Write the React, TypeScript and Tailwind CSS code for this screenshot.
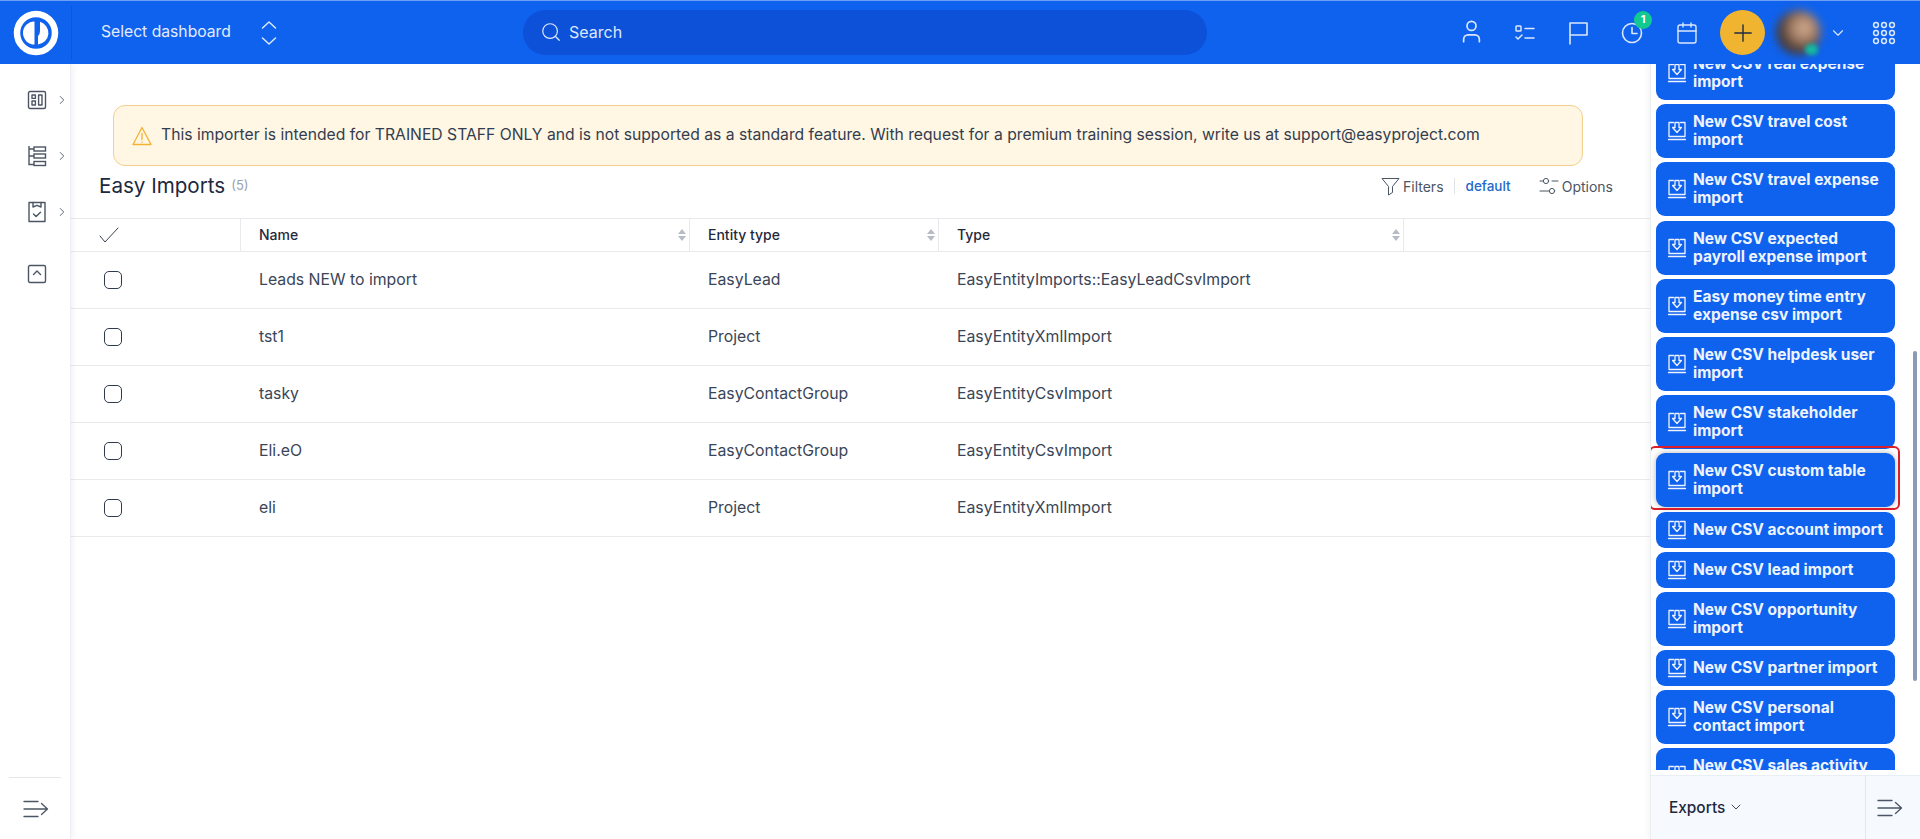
import { ReactNode } from 'react';
import { Calendar, ChevronDown, ChevronRight, Plus, Search, User } from 'lucide-react';

const imports = [
  { name: 'Leads NEW to import', entity: 'EasyLead', type: 'EasyEntityImports::EasyLeadCsvImport' },
  { name: 'tst1', entity: 'Project', type: 'EasyEntityXmlImport' },
  { name: 'tasky', entity: 'EasyContactGroup', type: 'EasyEntityCsvImport' },
  { name: 'Eli.eO', entity: 'EasyContactGroup', type: 'EasyEntityCsvImport' },
  { name: 'eli', entity: 'Project', type: 'EasyEntityXmlImport' },
];

const panelButtons = [
  { label: 'New CSV real expense import', tall: true },
  { label: 'New CSV travel cost import', tall: true },
  { label: 'New CSV travel expense import', tall: true },
  { label: 'New CSV expected payroll expense import', tall: true },
  { label: 'Easy money time entry expense csv import', tall: true },
  { label: 'New CSV helpdesk user import', tall: true },
  { label: 'New CSV stakeholder import', tall: true },
  { label: 'New CSV custom table import', tall: true, marked: true },
  { label: 'New CSV account import', tall: false },
  { label: 'New CSV lead import', tall: false },
  { label: 'New CSV opportunity import', tall: true },
  { label: 'New CSV partner import', tall: false },
  { label: 'New CSV personal contact import', tall: true },
  { label: 'New CSV sales activity import', tall: true },
];

function Logo() {
  return (
    <svg width="46" height="46" viewBox="0 0 46 46">
      <circle cx="23" cy="23" r="19" fill="none" stroke="#fff" strokeWidth="6.5" />
      <path d="M21.5 11.5 A11.5 11.5 0 0 0 21.5 34.5 Z" fill="#fff" />
      <path d="M27 9 L27 21 Q27 24 25 26 L25 34.5 A11.6 11.6 0 0 0 27 11.8" fill="#fff" />
    </svg>
  );
}

function UpDownIcon() {
  return (
    <svg width="20" height="26" viewBox="0 0 20 26" fill="none" stroke="#dce8fd" strokeWidth="1.5" strokeLinecap="round" strokeLinejoin="round">
      <path d="M3.5 8 10 2l6.5 6M3.5 18l6.5 6 6.5-6" />
    </svg>
  );
}

function TaskListIcon() {
  return (
    <svg width="24" height="24" viewBox="0 0 24 24" fill="none" stroke="currentColor" strokeWidth="1.5" strokeLinecap="round" strokeLinejoin="round">
      <rect x="3" y="5" width="5" height="5" rx="0.8" />
      <path d="M12 7.5h9M3 16l2 2 4-4M12 17h9" />
    </svg>
  );
}

function FlagIcon() {
  return (
    <svg width="24" height="26" viewBox="0 0 24 26" fill="none" stroke="currentColor" strokeWidth="1.6" strokeLinecap="round" strokeLinejoin="round">
      <path d="M4 24V3H21V15H4" />
    </svg>
  );
}

function ClockIcon() {
  return (
    <svg width="24" height="24" viewBox="0 0 24 24" fill="none" stroke="currentColor" strokeWidth="1.6" strokeLinecap="round" strokeLinejoin="round">
      <circle cx="12" cy="12" r="9.5" />
      <path d="M12 6.5V12.5H17" />
    </svg>
  );
}

function GridIcon() {
  const dots = [4, 12, 20];
  return (
    <svg width="24" height="24" viewBox="0 0 24 24" fill="none" stroke="currentColor" strokeWidth="1.5">
      {dots.map((y) => dots.map((x) => <circle key={`${x}-${y}`} cx={x} cy={y} r="2.4" />))}
    </svg>
  );
}

function DashIcon() {
  return (
    <svg width="20" height="20" viewBox="0 0 20 20" fill="none" stroke="#4b5563" strokeWidth="1.4" strokeLinejoin="round">
      <rect x="1.5" y="1.5" width="17" height="17" rx="1.5" />
      <rect x="5" y="5" width="3.4" height="3.4" />
      <rect x="5" y="11" width="3.4" height="4" />
      <rect x="11.6" y="5" width="3.4" height="10" />
    </svg>
  );
}

function TreeIcon() {
  return (
    <svg width="20" height="22" viewBox="0 0 20 22" fill="none" stroke="#4b5563" strokeWidth="1.4">
      <path d="M2 1v18.5h5M2 11h5M2 4h5" />
      <rect x="7" y="2" width="11.5" height="4" />
      <rect x="7" y="9" width="11.5" height="4" />
      <rect x="7" y="16.5" width="11.5" height="4" />
    </svg>
  );
}

function ClipboardIcon() {
  return (
    <svg width="20" height="22" viewBox="0 0 20 22" fill="none" stroke="#4b5563" strokeWidth="1.4" strokeLinejoin="round" strokeLinecap="round">
      <path d="M6 1.5H2V20.5H18V1.5H14" />
      <path d="M6 1.5H14V6L10 4.4 6 6Z" />
      <path d="M6.5 13l2.6 2.6 4.4-4.4" />
    </svg>
  );
}

function FoldIcon() {
  return (
    <svg width="20" height="20" viewBox="0 0 20 20" fill="none" stroke="#4b5563" strokeWidth="1.4" strokeLinejoin="round" strokeLinecap="round">
      <rect x="1.5" y="1.5" width="17" height="17" rx="1.5" />
      <path d="M6.5 10.5 10 7l3.5 3.5" />
    </svg>
  );
}

function ArrowsIcon() {
  return (
    <svg width="26" height="20" viewBox="0 0 26 20" fill="none" stroke="#4b5563" strokeWidth="1.3" strokeLinecap="round" strokeLinejoin="round">
      <path d="M1 2.5H15M1 10H24.5M1 17.5H15M18.5 4.5 24.5 10 18.5 15.5" />
    </svg>
  );
}

function ImportIcon() {
  return (
    <svg width="20" height="20" viewBox="0 0 20 20" fill="none" stroke="currentColor" strokeWidth="1.3" strokeLinecap="round" strokeLinejoin="round" className="shrink-0">
      <path d="M6.5 1.5H2v14h16v-14h-4.5" />
      <path d="M1.5 18.5h17" />
      <path d="M8 1.5h4v5h2.4L10 11.5 5.6 6.5H8Z" />
    </svg>
  );
}

function FilterIcon() {
  return (
    <svg width="19" height="19" viewBox="0 0 19 19" fill="none" stroke="#4b5563" strokeWidth="1" strokeLinejoin="round">
      <path d="M1 1.5H18L11.5 9.5V15.5L7.5 18V9.5Z" />
    </svg>
  );
}

function OptionsIcon() {
  return (
    <svg width="20" height="18" viewBox="0 0 20 18" fill="none" stroke="#4b5563" strokeWidth="1" strokeLinecap="round">
      <circle cx="7" cy="4" r="2.6" />
      <circle cx="13" cy="14" r="2.6" />
      <path d="M1 4h3.4M13 4h6M1 14h9.4" />
    </svg>
  );
}

function SortArrows() {
  return (
    <svg width="8" height="12" viewBox="0 0 8 12" fill="#b6bcc6" className="absolute right-[3px] top-1/2 -translate-y-1/2">
      <path d="M4 0 8 5H0ZM0 7H8L4 12Z" />
    </svg>
  );
}

function HeaderCell({ width, children }: { width: string; children: ReactNode }) {
  return (
    <div className={`${width} relative flex items-center border-r border-[#e8eaee] pb-[1px] pl-[18px] text-[14px] font-medium text-[#1f2a3d]`}>
      {children}
      <SortArrows />
    </div>
  );
}

function SideItem({ icon, arrow }: { icon: ReactNode; arrow?: boolean }) {
  return (
    <div className="relative flex h-[56px] items-center pl-[27px]">
      {icon}
      {arrow && <ChevronRight className="absolute left-[55px] h-[14px] w-[14px] text-[#4b5563]" strokeWidth={1.5} />}
    </div>
  );
}

export default function App() {
  return (
    <div className="flex h-[839px] w-[1920px] flex-col overflow-hidden bg-white font-['Inter',sans-serif] text-[#2b3648]">
      <header className="relative z-20 flex h-16 shrink-0 items-center border-t border-[#6d9ff5] bg-[#0f62ee] text-white">
        <div className="flex h-[54px] w-[72px] items-center justify-center border-r border-[#0d57d6]">
          <Logo />
        </div>
        <div className="ml-[29px] w-[131px] whitespace-nowrap pb-[2px] text-[15.7px] text-[#e3ecfd]">Select dashboard</div>
        <div className="ml-[27px]"><UpDownIcon /></div>
        <div className="ml-[244px] flex h-[45px] w-[684px] items-center rounded-full bg-[#0c51d8] pb-[1px] pl-[17px] text-[16px] text-[#dce8fd]">
          <Search className="h-[22px] w-[22px]" strokeWidth={1.3} />
          <span className="ml-[7px]">Search</span>
        </div>
        <div className="ml-auto flex items-center text-[#dce8fd]">
          <User className="-mt-[2px] h-[27px] w-[27px]" strokeWidth={1.5} />
          <div className="ml-[28px]"><TaskListIcon /></div>
          <div className="ml-[29px]"><FlagIcon /></div>
          <div className="relative ml-[30px]">
            <ClockIcon />
            <span className="absolute -right-[8px] -top-[10px] flex h-[18px] w-[18px] items-center justify-center rounded-full bg-[#12c98f] text-[11px] font-bold text-white">1</span>
          </div>
          <Calendar className="ml-[31px] h-[24px] w-[24px]" strokeWidth={1.4} />
          <div className="ml-[21px] flex h-[45px] w-[45px] items-center justify-center rounded-full bg-[#f0b431]">
            <Plus className="h-[28px] w-[28px] text-[#1d2c44]" strokeWidth={1.2} />
          </div>
          <div className="relative ml-[11px] h-[45px] w-[45px]">
            <div className="absolute inset-0 rounded-full bg-[radial-gradient(circle_at_62%_40%,#d2ad94_0%,#a98269_30%,#4a3a33_62%,#2d3b55_100%)] blur-[4px]" />
            <div className="absolute bottom-0 right-[3px] h-[11px] w-[13px] rounded-full bg-[#14b8a0] blur-[2px]" />
          </div>
          <ChevronDown className="ml-[8px] h-[18px] w-[18px]" strokeWidth={1.5} />
          <div className="ml-[25px] mr-[24px]"><GridIcon /></div>
        </div>
      </header>

      <div className="flex min-h-0 flex-1">
        <aside className="z-10 flex w-[71px] shrink-0 flex-col border-r border-[#eceef2] pt-[8px] shadow-[2px_0_6px_rgba(20,30,60,0.06)]">
          <SideItem icon={<DashIcon />} arrow />
          <SideItem icon={<TreeIcon />} arrow />
          <SideItem icon={<ClipboardIcon />} arrow />
          <div className="mt-[6px]"><SideItem icon={<FoldIcon />} /></div>
          <div className="mx-[9px] mt-auto flex h-[62px] items-center justify-center border-t border-[#e5e7eb] pl-[2px]">
            <ArrowsIcon />
          </div>
        </aside>

        <main className="min-w-0 flex-1">
          <div className="ml-[42px] mt-[41px] flex h-[61px] w-[1470px] items-center rounded-[12px] border border-[#f3cf8e] bg-[#fff6e4] pl-[18px] text-[15.7px] text-[#333d4e]">
            <svg width="20" height="20" viewBox="0 0 20 20" fill="none" stroke="#f2b233" strokeWidth="1.3" strokeLinejoin="round" strokeLinecap="round">
              <path d="M10 1.5 19 18.5H1Z" />
              <path d="M10 7.5v6M10 15.8v.4" />
            </svg>
            <span className="ml-[9px] pb-[1px]">This importer is intended for TRAINED STAFF ONLY and is not supported as a standard feature. With request for a premium training session, write us at support@easyproject.com</span>
          </div>

          <div className="mb-[12px] flex h-[40px] items-center pl-[28px] pr-[37px]">
            <h1 className="text-[20.6px] font-normal text-[#1c2940]">Easy Imports</h1>
            <span className="ml-[6px] text-[13px] text-[#9aa2ae]">(5)</span>
            <div className="ml-auto flex items-center text-[14px] text-[#4b5563]">
              <FilterIcon />
              <span className="ml-[3px]">Filters</span>
              <span className="ml-[10px] h-[16px] border-l border-[#dfe2e7]" />
              <span className="ml-[11px] text-[13.5px] font-medium text-[#2469c9]">default</span>
              <div className="ml-[28px]"><OptionsIcon /></div>
              <span className="ml-[3px]">Options</span>
            </div>
          </div>

          <div className="flex h-[34px] border-y border-[#e8eaee]">
            <div className="flex w-[170px] items-center border-r border-[#e8eaee] pl-[27px]">
              <svg width="22" height="18" viewBox="0 0 22 18" fill="none" stroke="#374151" strokeWidth="1" strokeLinecap="round" strokeLinejoin="round">
                <path d="M2 10l5 6L20 2" />
              </svg>
            </div>
            <HeaderCell width="w-[449px]">Name</HeaderCell>
            <HeaderCell width="w-[249px]">Entity type</HeaderCell>
            <HeaderCell width="w-[465px]">Type</HeaderCell>
          </div>

          {imports.map((row) => (
            <div key={row.name} className="flex h-[57px] items-center border-b border-[#e8eaee] pb-[1px] text-[15.8px] text-[#3a4557]">
              <div className="w-[170px] pl-[33px]">
                <div className="h-[18px] w-[18px] rounded-[5px] border border-[#2f3a4c] bg-white" />
              </div>
              <div className="w-[449px] pl-[18px]">{row.name}</div>
              <div className="w-[249px] pl-[18px]">{row.entity}</div>
              <div className="pl-[18px]">{row.type}</div>
            </div>
          ))}
        </main>

        <aside className="relative z-10 flex w-[270px] shrink-0 flex-col border-l border-[#eceef2] shadow-[-2px_0_6px_rgba(20,30,60,0.05)]">
          <div className="h-[706px] shrink-0 overflow-hidden">
            <div className="-mt-[18px] flex w-[239px] translate-x-[5px] flex-col gap-[4.2px]">
              {panelButtons.map((b) => (
                <div key={b.label} className="relative shrink-0">
                  <div className={`flex items-center rounded-[9px] bg-[#0f62ee] pl-[11px] pr-[6px] text-[15.5px] font-bold leading-[18px] text-[#eef4ff] ${b.tall ? 'h-[54px]' : 'h-[36px]'} ${b.marked ? 'shadow-[0_0_6px_rgba(0,0,0,0.3)]' : ''}`}>
                    <ImportIcon />
                    <span className="ml-[6px]">{b.label}</span>
                  </div>
                  {b.marked && <div className="absolute -bottom-[3px] -left-[7px] -right-[5px] -top-[7px] rounded-[6px] border-2 border-[#dd1c2a]" />}
                </div>
              ))}
            </div>
          </div>
          <div className="absolute right-[3px] top-[287px] h-[330px] w-[4px] rounded-full bg-[#8a9bb3]" />
          <div className="mt-[5px] flex flex-1 items-center border-t border-[#e8eef6] bg-[#f6f9fe]">
            <div className="flex w-[214px] items-center pl-[18px] text-[15.4px] font-medium text-[#1c2940]">
              Exports
              <ChevronDown className="ml-[3px] h-[16px] w-[16px]" strokeWidth={1.3} />
            </div>
            <div className="flex h-full flex-1 items-center justify-center border-l border-[#e3e7ed] pr-[6px]">
              <ArrowsIcon />
            </div>
          </div>
        </aside>
      </div>
    </div>
  );
}
